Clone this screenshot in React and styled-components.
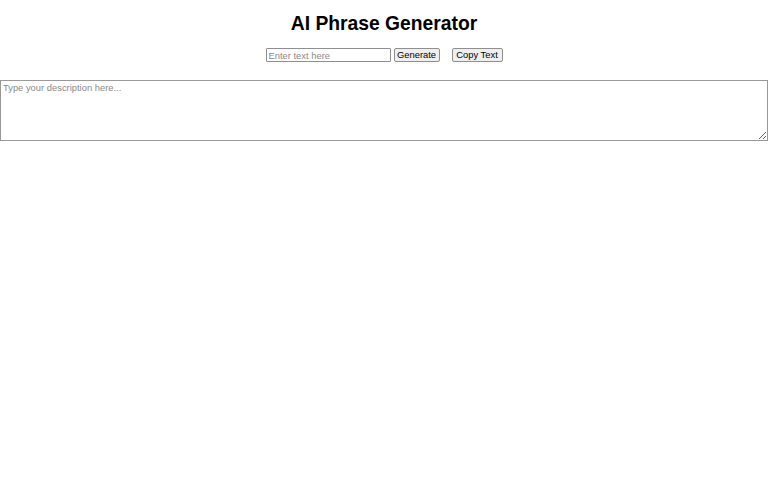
import React, {useState} from 'react'
import styled, {createGlobalStyle} from 'styled-components'

const GlobalStyle = createGlobalStyle`
    body {
        margin: 0;
        background: #fff;
        font-family: "Liberation Sans", Arial, sans-serif;
    }
`;

const Page = styled.div`
    display: flex;
    flex-direction: column;
    align-items: center;
`;

const Title = styled.h1`
    margin: 12px 0 13px;
    font-size: 19.3px;
    line-height: 23px;
    font-weight: bold;
    color: #000;
`;

const Controls = styled.div`
    display: flex;
    align-items: center;
    height: 14px;
    margin-bottom: 18px;
`;

const TextInput = styled.input`
    box-sizing: border-box;
    width: 125px;
    height: 14px;
    padding: 0 2px;
    border: 1px solid #8f8f8f;
    border-radius: 1px;
    font-family: inherit;
    font-size: 9.4px;
    color: #000;

    &::placeholder {
        color: #8a8a8a;
    }
`;

const Button = styled.button`
    box-sizing: border-box;
    width: ${props => props.width}px;
    height: 14px;
    margin-left: ${props => props.gap}px;
    padding: 0;
    border: 1px solid #8f8f8f;
    border-radius: 2px;
    background: #efefef;
    font-family: inherit;
    font-size: 9.4px;
    line-height: 12px;
    color: #000;
`;

const Description = styled.textarea`
    box-sizing: border-box;
    display: block;
    width: 100%;
    height: 61px;
    margin: 0;
    padding: 1px 2px;
    border: 1px solid #999;
    font-family: inherit;
    font-size: 9.4px;
    color: #000;

    &::placeholder {
        color: #8a8a8a;
    }
`;

export default function App() {
    const [text, setText] = useState('')
    const [description, setDescription] = useState('')

    const copyText = () => {
        if (navigator.clipboard) navigator.clipboard.writeText(description).catch(() => {})
    }

    return (
        <>
            <GlobalStyle />
            <Page>
                <Title>AI Phrase Generator</Title>
                <Controls>
                    <TextInput
                        placeholder="Enter text here"
                        value={text}
                        onChange={e => setText(e.target.value)}
                    />
                    <Button gap={3} width={46} onClick={() => setDescription(text)}>Generate</Button>
                    <Button gap={12} width={51} onClick={copyText}>Copy Text</Button>
                </Controls>
            </Page>
            <Description
                placeholder="Type your description here..."
                value={description}
                onChange={e => setDescription(e.target.value)}
            />
        </>
    )
}
